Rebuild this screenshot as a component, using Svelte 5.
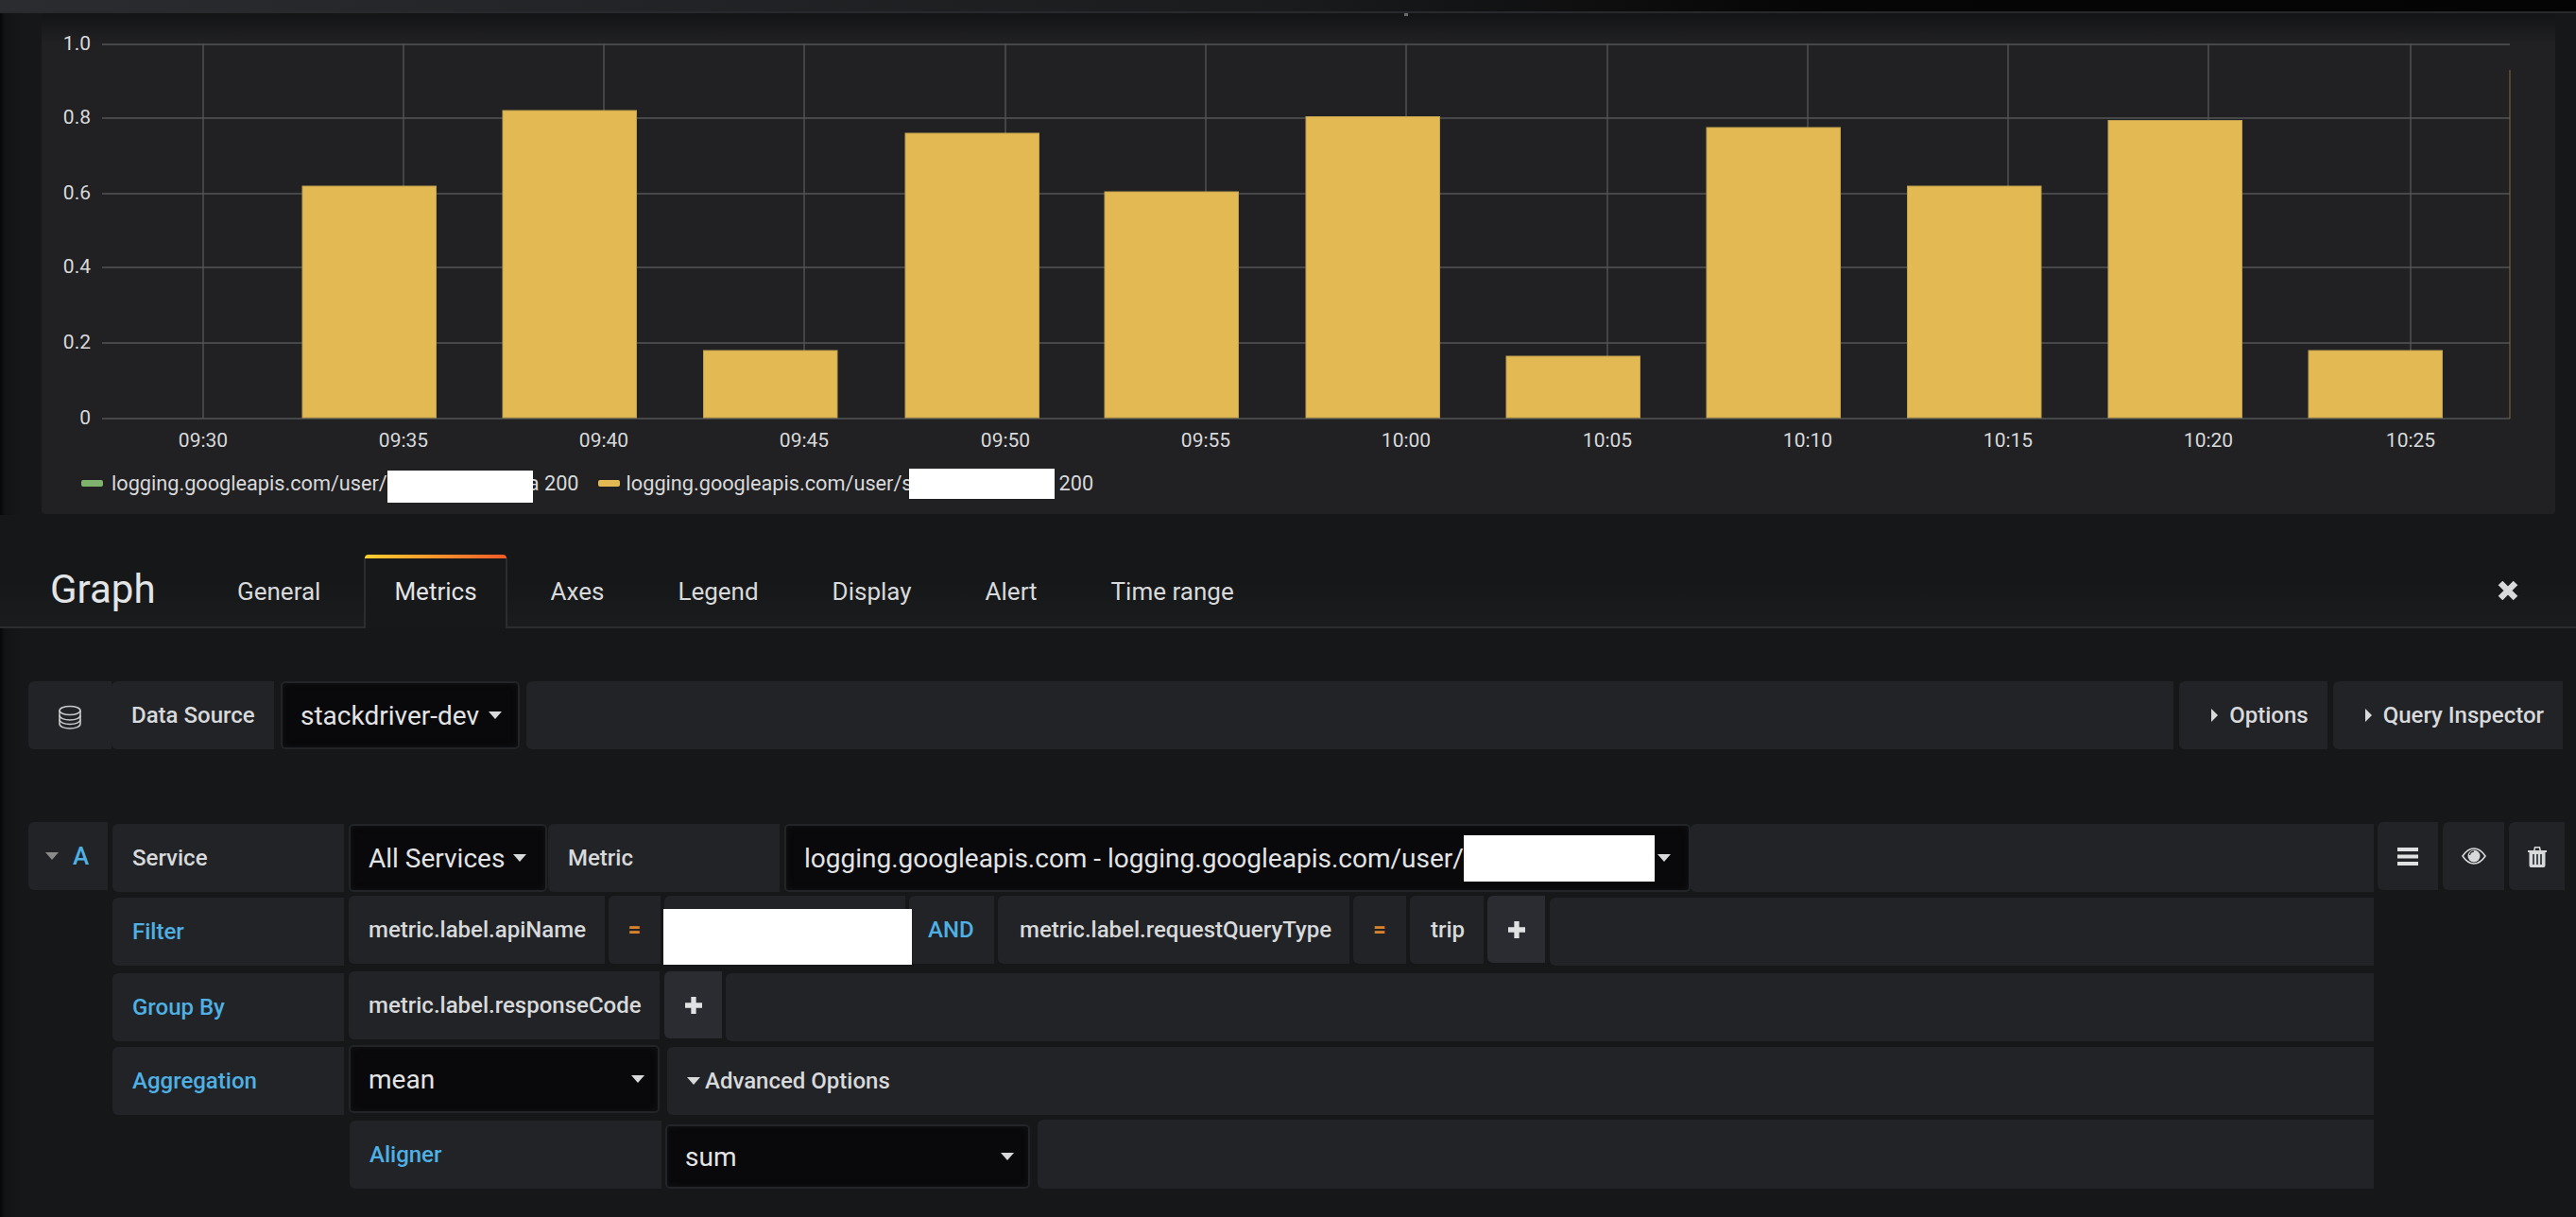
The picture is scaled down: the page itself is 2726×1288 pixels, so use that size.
<script>
	const hLines = [
		{ y: 47, label: '1.0' },
		{ y: 125, label: '0.8' },
		{ y: 205, label: '0.6' },
		{ y: 283, label: '0.4' },
		{ y: 363, label: '0.2' },
		{ y: 443, label: '0' },
	];

	const ticks = [
		{ x: 215, label: '09:30' },
		{ x: 427, label: '09:35' },
		{ x: 639, label: '09:40' },
		{ x: 851, label: '09:45' },
		{ x: 1064, label: '09:50' },
		{ x: 1276, label: '09:55' },
		{ x: 1488, label: '10:00' },
		{ x: 1701, label: '10:05' },
		{ x: 1913, label: '10:10' },
		{ x: 2125, label: '10:15' },
		{ x: 2337, label: '10:20' },
		{ x: 2551, label: '10:25' },
	];

	const bars = [
		{ x: 320, top: 197 },
		{ x: 532, top: 117 },
		{ x: 744.5, top: 371 },
		{ x: 958, top: 141 },
		{ x: 1169, top: 203 },
		{ x: 1382, top: 123.5 },
		{ x: 1594, top: 377 },
		{ x: 1806, top: 135 },
		{ x: 2018.5, top: 197 },
		{ x: 2231, top: 127.5 },
		{ x: 2443, top: 371 },
	];

	const tabs = ['General', 'Metrics', 'Axes', 'Legend', 'Display', 'Alert', 'Time range'];
</script>

<div class="top-strip"></div>

<section class="panel">
	<svg class="chart" viewBox="44 14 2660 480" width="2660" height="480">
		<rect x="1486" y="13" width="4" height="4" fill="#6a6a6a" />
		{#each hLines as l}
			<line x1="108" x2="2656" y1={l.y} y2={l.y} stroke="#464749" stroke-width="2" />
			<text x="96" y={l.y + 6} text-anchor="end">{l.label}</text>
		{/each}
		{#each ticks as t}
			<line x1={t.x} x2={t.x} y1="46" y2="443" stroke="#505052" stroke-width="1.5" />
			<text x={t.x} y="473" text-anchor="middle">{t.label}</text>
		{/each}
		<line x1="2656" x2="2656" y1="74" y2="443" stroke="#7d6f38" stroke-width="1" />
		{#each bars as b}
			<rect x={b.x} y={b.top} width="141.5" height={442 - b.top} fill="#e2b952" stroke="#bfa24f" stroke-width="1" />
		{/each}
	</svg>
	<div class="legend">
		<span class="swatch green"></span>
		<span>logging.googleapis.com/user/</span>
		<span class="redact first-box"></span>
		<span>a 200</span>
		<span class="swatch yellow second"></span>
		<span>logging.googleapis.com/user/s</span>
		<span class="redact second-box"></span>
		<span>200</span>
	</div>
</section>

<header class="editor-head">
	<h2>Graph</h2>
	<nav class="tabs">
		{#each tabs as tab}
			<span class="tab" class:active={tab === 'Metrics'}>{tab}</span>
		{/each}
	</nav>
	<svg class="close" width="24" height="24" viewBox="0 0 24 24">
		<path d="M4 4 L20 20 M20 4 L4 20" stroke="#d8d9da" stroke-width="6.5" />
	</svg>
</header>

<div class="ds-row">
	<div class="cell ds-icon">
		<svg width="26" height="26" viewBox="0 0 26 26" fill="none" stroke="#c9cacb" stroke-width="1.6">
			<ellipse cx="13" cy="6" rx="11" ry="4.5" />
			<path d="M2 6 V20 C2 23 7 25 13 25 C19 25 24 23 24 20 V6" />
			<path d="M2 11 C2 14 7 16 13 16 C19 16 24 14 24 11" />
			<path d="M2 15.5 C2 18.5 7 20.5 13 20.5 C19 20.5 24 18.5 24 15.5" />
		</svg>
	</div>
	<div class="cell strong ds-label">Data Source</div>
	<div class="select ds-select">stackdriver-dev <span class="caret"></span></div>
	<div class="cell grow ds-fill"></div>
	<div class="cell strong ds-btn"><span class="caret-right"></span>Options</div>
	<div class="cell strong ds-btn"><span class="caret-right"></span>Query Inspector</div>
</div>

<div class="query">
	<div class="cell q-ref">
		<span class="caret muted"></span>
		<span class="ref">A</span>
	</div>

	<div class="q-rows">
		<div class="row first">
			<div class="cell strong label">Service</div>
			<div class="select service">All Services <span class="caret"></span></div>
			<div class="cell strong metric-label">Metric</div>
			<div class="select metric">
				<span>logging.googleapis.com - logging.googleapis.com/user/</span>
				<span class="redact metric-box"></span>
				<span class="caret"></span>
			</div>
			<div class="cell grow"></div>
		</div>

		<div class="row second">
			<div class="cell strong label blue">Filter</div>
			<div class="cell strong lift key w-api">metric.label.apiName</div>
			<div class="cell lift op w-op1">=</div>
			<div class="cell lift val-cell"><span class="redact val-box"></span></div>
			<div class="cell strong lift blue and">AND</div>
			<div class="cell strong lift key w-req">metric.label.requestQueryType</div>
			<div class="cell lift op w-op2">=</div>
			<div class="cell strong lift trip">trip</div>
			<div class="cell lift plus">
				<svg width="20" height="20" viewBox="0 0 20 20"><path d="M10 1 V19 M1 10 H19" stroke="#e0e1e2" stroke-width="5.3" /></svg>
			</div>
			<div class="cell grow"></div>
		</div>

		<div class="row third">
			<div class="cell strong label blue">Group By</div>
			<div class="cell strong lift key w-group">metric.label.responseCode</div>
			<div class="cell lift plus">
				<svg width="20" height="20" viewBox="0 0 20 20"><path d="M10 1 V19 M1 10 H19" stroke="#e0e1e2" stroke-width="5.3" /></svg>
			</div>
			<div class="cell grow"></div>
		</div>

		<div class="row fourth">
			<div class="cell strong label blue">Aggregation</div>
			<div class="select lift mean"><span>mean</span><span class="caret"></span></div>
			<div class="cell strong grow advanced"><span class="caret"></span>Advanced Options</div>
		</div>

		<div class="row fifth">
			<div class="cell strong blue aligner">Aligner</div>
			<div class="select sum"><span>sum</span><span class="caret"></span></div>
			<div class="cell grow sum-fill"></div>
		</div>
	</div>

	<div class="q-actions">
		<div class="cell act a1">
			<svg width="22" height="19" viewBox="0 0 22 19"><path d="M0 2 H22 M0 9.5 H22 M0 17 H22" stroke="#e0e1e2" stroke-width="4" /></svg>
		</div>
		<div class="cell act a2">
			<svg width="26" height="18" viewBox="0 0 26 18">
				<path d="M1 9 C5 3 9 1 13 1 C17 1 21 3 25 9 C21 15 17 17 13 17 C9 17 5 15 1 9 Z" fill="none" stroke="#d8d9da" stroke-width="1.6" />
				<circle cx="13" cy="9" r="6.5" fill="#d8d9da" />
				<path d="M8.5 8 C9 5.5 11 4.2 13 4.2" fill="none" stroke="#212327" stroke-width="1.2" />
			</svg>
		</div>
		<div class="cell act a3">
			<svg width="20" height="23" viewBox="0 0 20 23">
				<path d="M0 5 H20 V7 H18.5 V21 Q18.5 23 16.5 23 H3.5 Q1.5 23 1.5 21 V7 H0 Z M6 5 L7 1 H13 L14 5 H12.4 L11.8 2.6 H8.2 L7.6 5 Z" fill="#d8d9da" />
				<path d="M6 9 V20 M10 9 V20 M14 9 V20" stroke="#212327" stroke-width="1.6" />
			</svg>
		</div>
	</div>
</div>

<style>
	:global(body) {
		margin: 0;
		min-height: 1288px;
		overflow: hidden;
		font-family: Roboto, 'Liberation Sans', sans-serif;
		color: #d8d9da;
		background: linear-gradient(to right, #060708 0, #121315 5px, #161719 24px) #161719;
	}

	.top-strip {
		height: 12px;
		border-bottom: 2px solid #27292c;
		background: linear-gradient(to right, #2a2c2f 0, #1a1b1d 50%, #060606 70%, #040404 100%);
	}

	.panel {
		box-sizing: border-box;
		width: 2660px;
		height: 530px;
		margin-left: 44px;
		border-radius: 0 0 4px 4px;
		background: linear-gradient(to bottom, #131416 0, #212124 32px);
	}

	.chart {
		display: block;
	}
	.chart text {
		font-family: Roboto, sans-serif;
		font-size: 21px;
		fill: #d8d9da;
	}

	.legend {
		display: flex;
		align-items: center;
		height: 34px;
		padding-left: 42px;
		font-size: 21.7px;
		white-space: nowrap;
	}
	.swatch {
		width: 23px;
		height: 7px;
		margin-right: 9px;
		border-radius: 2px;
	}
	.green { background: #7eb26d; }
	.yellow { background: #e2b952; }
	.swatch.second { margin-left: 20px; margin-right: 7px; }

	.redact {
		display: inline-block;
		background: #fff;
		flex: none;
	}
	.first-box {
		position: relative;
		width: 154px;
		height: 34px;
		margin-top: 8px;
		margin-right: -5px;
	}
	.second-box { width: 154px; height: 32px; margin-left: -4px; margin-right: 5px; margin-top: 2px; }

	.editor-head {
		display: flex;
		align-items: flex-end;
		height: 120px;
		margin-top: 1px;
		padding-left: 53px;
		border-bottom: 2px solid #2b2d30;
		position: relative;
		box-sizing: border-box;
		background: linear-gradient(to bottom, #161719 60%, #1b1c1e 100%);
	}
	h2 {
		margin: 0 0 15px;
		font-size: 42px;
		font-weight: 400;
		width: 167px;
		color: #e3e4e5;
	}
	.tabs {
		display: flex;
		gap: 14px;
		margin-left: -1px;
	}
	.tab {
		box-sizing: border-box;
		height: 78px;
		padding: 24px 32px 0;
		font-size: 26px;
		margin-bottom: -2px;
	}
	.tab.active {
		position: relative;
		border: 2px solid #2b2d30;
		border-top: 0;
		border-bottom: 0;
		border-radius: 6px 6px 0 0;
		padding: 24px 30px 0;
		background: #17181a;
		color: #e3e4e5;
	}
	.tab.active::before {
		content: '';
		position: absolute;
		left: -1px;
		right: -1px;
		top: 0;
		height: 4px;
		border-radius: 4px 4px 0 0;
		background: linear-gradient(to right, #ffd030, #f05a28);
	}
	.close {
		position: absolute;
		left: 2642px;
		top: 68px;
	}

	.cell {
		box-sizing: border-box;
		display: flex;
		align-items: center;
		height: 72px;
		flex: none;
		background: #212327;
		border-radius: 6px 0 0 6px;
		font-size: 24px;
	}
	.strong {
		font-weight: 500;
		white-space: nowrap;
	}
	.blue { color: #4fb0e3; }
	.grow { flex: 1; border-radius: 6px 0 0 6px; }
	.lift { margin-top: -2px; }

	.select {
		box-sizing: border-box;
		display: flex;
		align-items: center;
		height: 72px;
		flex: none;
		font-size: 28px;
		white-space: nowrap;
		background: #09090b;
		border: 2px solid #222427;
		border-radius: 5px;
		box-shadow: inset 0 0 6px #141517;
		color: #e3e4e5;
	}

	.caret {
		display: inline-block;
		flex: none;
		width: 0;
		height: 0;
		border-left: 7.5px solid transparent;
		border-right: 7.5px solid transparent;
		border-top: 8px solid #d8d9da;
	}
	.caret.muted { border-top-color: #8a8a8a; }
	.caret-right {
		display: inline-block;
		width: 0;
		height: 0;
		margin-right: 12px;
		border-top: 7px solid transparent;
		border-bottom: 7px solid transparent;
		border-left: 7px solid #d8d9da;
	}

	.ds-row {
		display: flex;
		margin: 56px 0 0 30px;
		width: 2682px;
	}
	.ds-row .cell, .ds-row .select { height: 72px; }
	.ds-icon { width: 88px; justify-content: center; padding-top: 4px; }
	.ds-label { width: 172px; padding-left: 21px; }
	.ds-select {
		width: 253px;
		margin-left: 7px;
		padding-left: 19px;
		gap: 10px;
	}
	.ds-fill { margin-left: 7px; margin-right: 6px; }
	.ds-btn {
		padding: 0 20px 0 34px;
		margin-right: 6px;
		border-radius: 6px 0 0 6px;
	}
	.ds-btn:last-child { margin-right: 0; }

	.query {
		display: flex;
		align-items: flex-start;
		margin: 77px 0 0 30px;
	}
	.q-ref {
		width: 84px;
		padding-left: 18px;
		gap: 15px;
	}
	.ref {
		color: #4fb0e3;
		font-size: 26px;
		font-weight: 500;
	}
	.q-rows {
		width: 2393px;
		margin: 2px 0 0 5px;
	}
	.row {
		display: flex;
		height: 72px;
	}
	.row.second { margin-top: 6px; }
	.row.third { margin-top: 8px; }
	.row.fourth { margin-top: 6px; }
	.row.fifth { margin-top: 6px; }

	.label { width: 245px; padding-left: 21px; }
	.service {
		width: 210px;
		margin-left: 5px;
		padding-left: 19px;
		gap: 9px;
	}
	.metric-label { width: 245px; margin-left: 1px; padding-left: 21px; }
	.metric {
		width: 959px;
		margin-left: 5px;
		padding-left: 19px;
	}
	.metric-box { width: 202px; height: 49px; margin-right: 3px; }

	.key { padding-left: 21px; margin-left: 5px; }
	.w-api { width: 271px; }
	.op {
		justify-content: center;
		color: #d9822b;
		font-weight: 700;
		margin-left: 4px;
	}
	.w-op1 { width: 55px; }
	.w-op2 { width: 56px; }
	.val-cell {
		position: relative;
		width: 255px;
		margin-left: 4px;
	}
	.val-box {
		position: absolute;
		left: -1px;
		top: 14px;
		width: 263px;
		height: 59px;
	}
	.and { width: 90px; margin-left: 4px; padding-left: 20px; }
	.w-req { width: 372px; margin-left: 4px; padding-left: 23px; }
	.trip { width: 78px; margin-left: 4px; padding-left: 22px; }
	.plus {
		width: 61px;
		margin: -2px 5px 0 4px;
		justify-content: center;
		background: #2b2c32;
		height: 71px;
	}
	.w-group { width: 329px; }
	.third .plus { margin-right: 4px; margin-left: 5px; }

	.mean {
		width: 329px;
		margin-left: 5px;
		padding: 0 14px 0 19px;
		justify-content: space-between;
	}
	.advanced {
		margin-left: 8px;
		padding-left: 21px;
		gap: 5px;
	}
	.aligner { width: 330px; margin-left: 251px; padding-left: 21px; }
	.sum {
		width: 386px;
		margin-left: 4px;
		padding: 0 15px 0 19px;
		justify-content: space-between;
		height: 68px;
		margin-top: 4px;
	}
	.sum-fill { margin-left: 8px; height: 73px; margin-top: -1px; }

	.q-actions {
		display: flex;
		gap: 5px;
		margin-left: 4px;
	}
	.act { justify-content: center; }
	.a1 { width: 64px; }
	.a2 { width: 65px; }
	.a3 { width: 59px; }
</style>
